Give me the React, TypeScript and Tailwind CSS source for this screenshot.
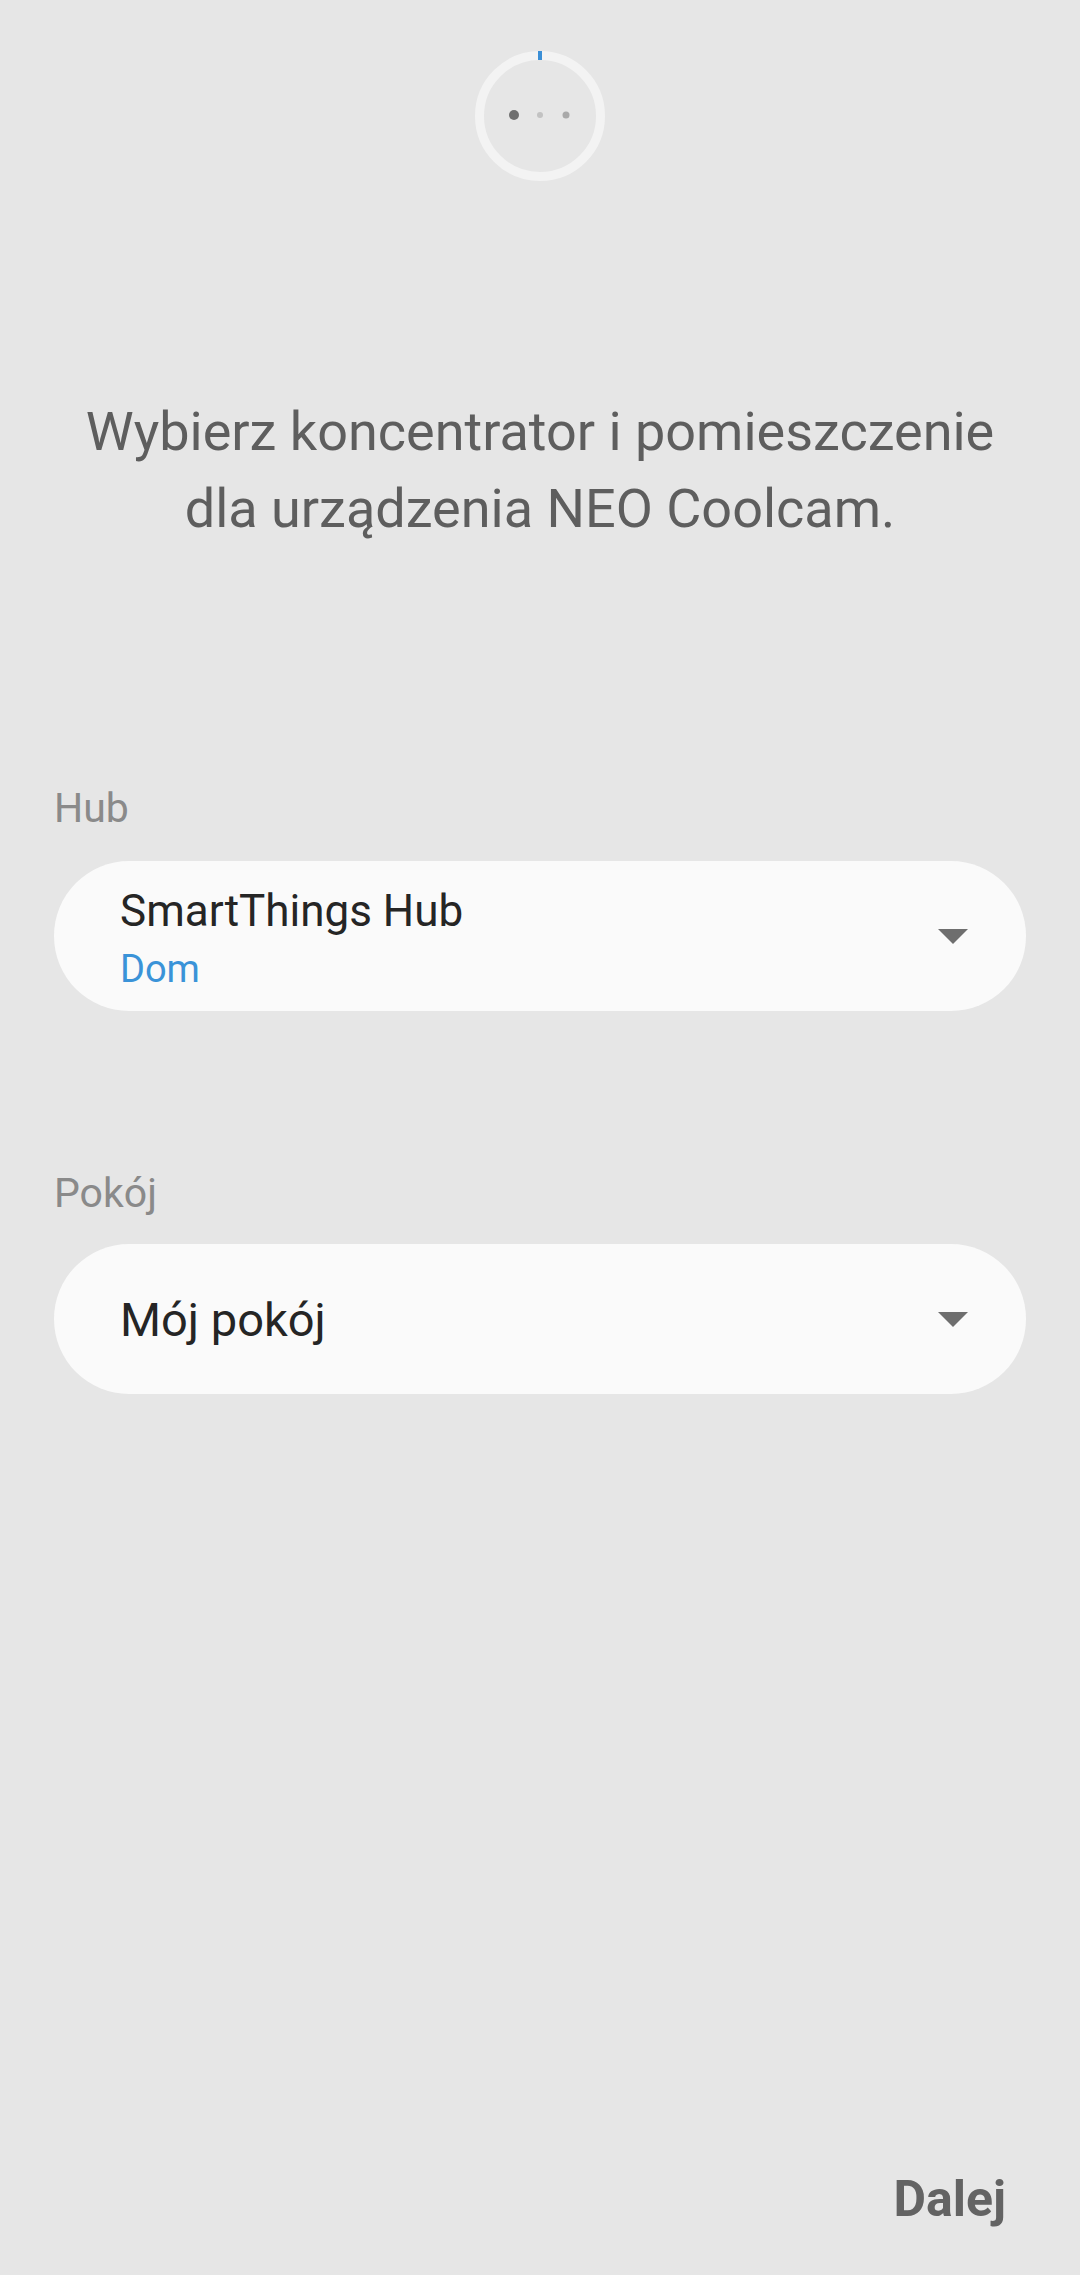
import React from "react";

function Spinner() {
  return (
    <svg width="140" height="140" viewBox="0 0 140 140" className="block">
      <circle cx="70" cy="70" r="60.5" fill="none" stroke="#f3f3f3" strokeWidth="9" />
      <rect x="68" y="5" width="4" height="9" fill="#3b8fd6" />
      <circle cx="44" cy="69" r="5" fill="#6f6f6f" />
      <circle cx="70" cy="69" r="3" fill="#c2c2c2" />
      <circle cx="96" cy="69" r="3.5" fill="#a9a9a9" />
    </svg>
  );
}

function Caret() {
  return (
    <svg width="30" height="15" viewBox="0 0 30 15" className="block shrink-0">
      <path d="M0 0 L30 0 L15 15 Z" fill="#6e6e6e" />
    </svg>
  );
}

export default function App() {
  return (
    <div
      className="relative flex h-[2275px] w-[1080px] flex-col bg-[#e6e6e6]"
      style={{ fontFamily: "Roboto, 'Noto Sans', sans-serif" }}
    >
      <div className="flex justify-center pt-[46px]">
        <Spinner />
      </div>

      <h1 className="mt-[207px] px-[40px] text-center text-[54px] font-normal leading-[77px] text-[#5e5e5e]">
        Wybierz koncentrator i pomieszczenie
        <br />
        dla urządzenia NEO Coolcam.
      </h1>

      <div className="mt-[237px] px-[54px]">
        <div className="text-[41px] leading-[48px] text-[#8a8a8a]">Hub</div>
        <div className="mt-[29px] flex h-[150px] items-start justify-between rounded-full bg-[#fafafa] pl-[66px] pr-[58px]">
          <div className="flex flex-col gap-[10px] pt-[25px]">
            <span className="text-[44px] leading-[50px] text-[#252525]">SmartThings Hub</span>
            <span className="text-[38px] leading-[46px] text-[#3a93d8]">Dom</span>
          </div>
          <div className="self-center">
            <Caret />
          </div>
        </div>

        <div className="mt-[158px] text-[41px] leading-[48px] text-[#8a8a8a]">Pokój</div>
        <div className="mt-[27px] flex h-[150px] items-center justify-between rounded-full bg-[#fafafa] pl-[66px] pr-[58px]">
          <span className="pt-[2px] text-[47px] leading-[56px] text-[#252525]">Mój pokój</span>
          <Caret />
        </div>
      </div>

      <div className="mt-auto flex justify-end pb-[46px] pr-[74px]">
        <span className="text-[50px] font-bold leading-[60px] text-[#636363]">Dalej</span>
      </div>
    </div>
  );
}
